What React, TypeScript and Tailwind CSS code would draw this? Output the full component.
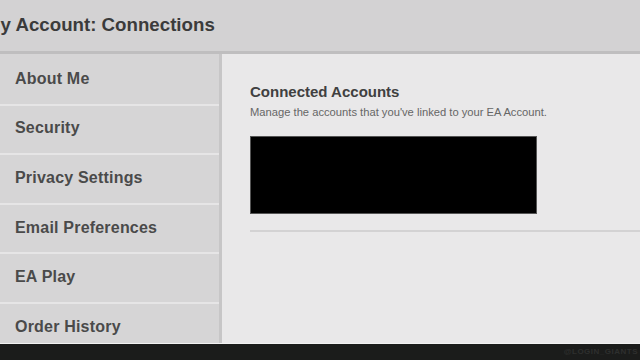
const navItems = ["About Me", "Security", "Privacy Settings", "Email Preferences", "EA Play", "Order History"];

export default function App() {
  return (
    <div className="flex h-[360px] w-[640px] flex-col overflow-hidden bg-[#e9e8e9] font-['Liberation_Sans',Arial,sans-serif]">
      <header className="flex h-[54px] shrink-0 items-center overflow-hidden border-b-[3px] border-[#bfbebf] bg-[#d3d2d3] pb-[1px]">
        <h1 className="ml-[-15px] whitespace-nowrap text-[18.7px] font-bold text-[#3b3b3b]">My Account: Connections</h1>
      </header>

      <div className="flex min-h-0 flex-1">
        <nav className="w-[222px] shrink-0 overflow-hidden border-r-[3px] border-[#c7c6c7] bg-[#d6d5d6] pt-[2px]">
          {navItems.map((item) => (
            <div key={item} className="flex h-[49.6px] items-center border-b-2 border-[#e6e5e6] pl-[15px] pb-[2px] text-[16px] font-bold tracking-[0.2px] text-[#4a4a4a]">
              {item}
            </div>
          ))}
        </nav>

        <main className="flex-1 pl-[28px] pt-[29px]">
          <h2 className="text-[15px] font-bold leading-[18px] text-[#404040]">Connected Accounts</h2>
          <p className="mt-[5px] text-[11.2px] leading-[13px] text-[#666666]">Manage the accounts that you've linked to your EA Account.</p>
          <div className="mt-[17px] h-[78px] w-[287px] border border-[#555] bg-black" />
          <div className="mt-[16px] h-[2px] bg-[#d3d2d3]" />
        </main>
      </div>

      <footer className="flex h-[17px] shrink-0 items-center justify-end border-t border-[#f2f2f2] bg-[#1b1c1b] pr-[2px]">
        <span className="text-[8px] font-bold tracking-[0.5px] text-[#2e2f2e]">@LOGIN_GIANTS</span>
      </footer>
    </div>
  );
}
